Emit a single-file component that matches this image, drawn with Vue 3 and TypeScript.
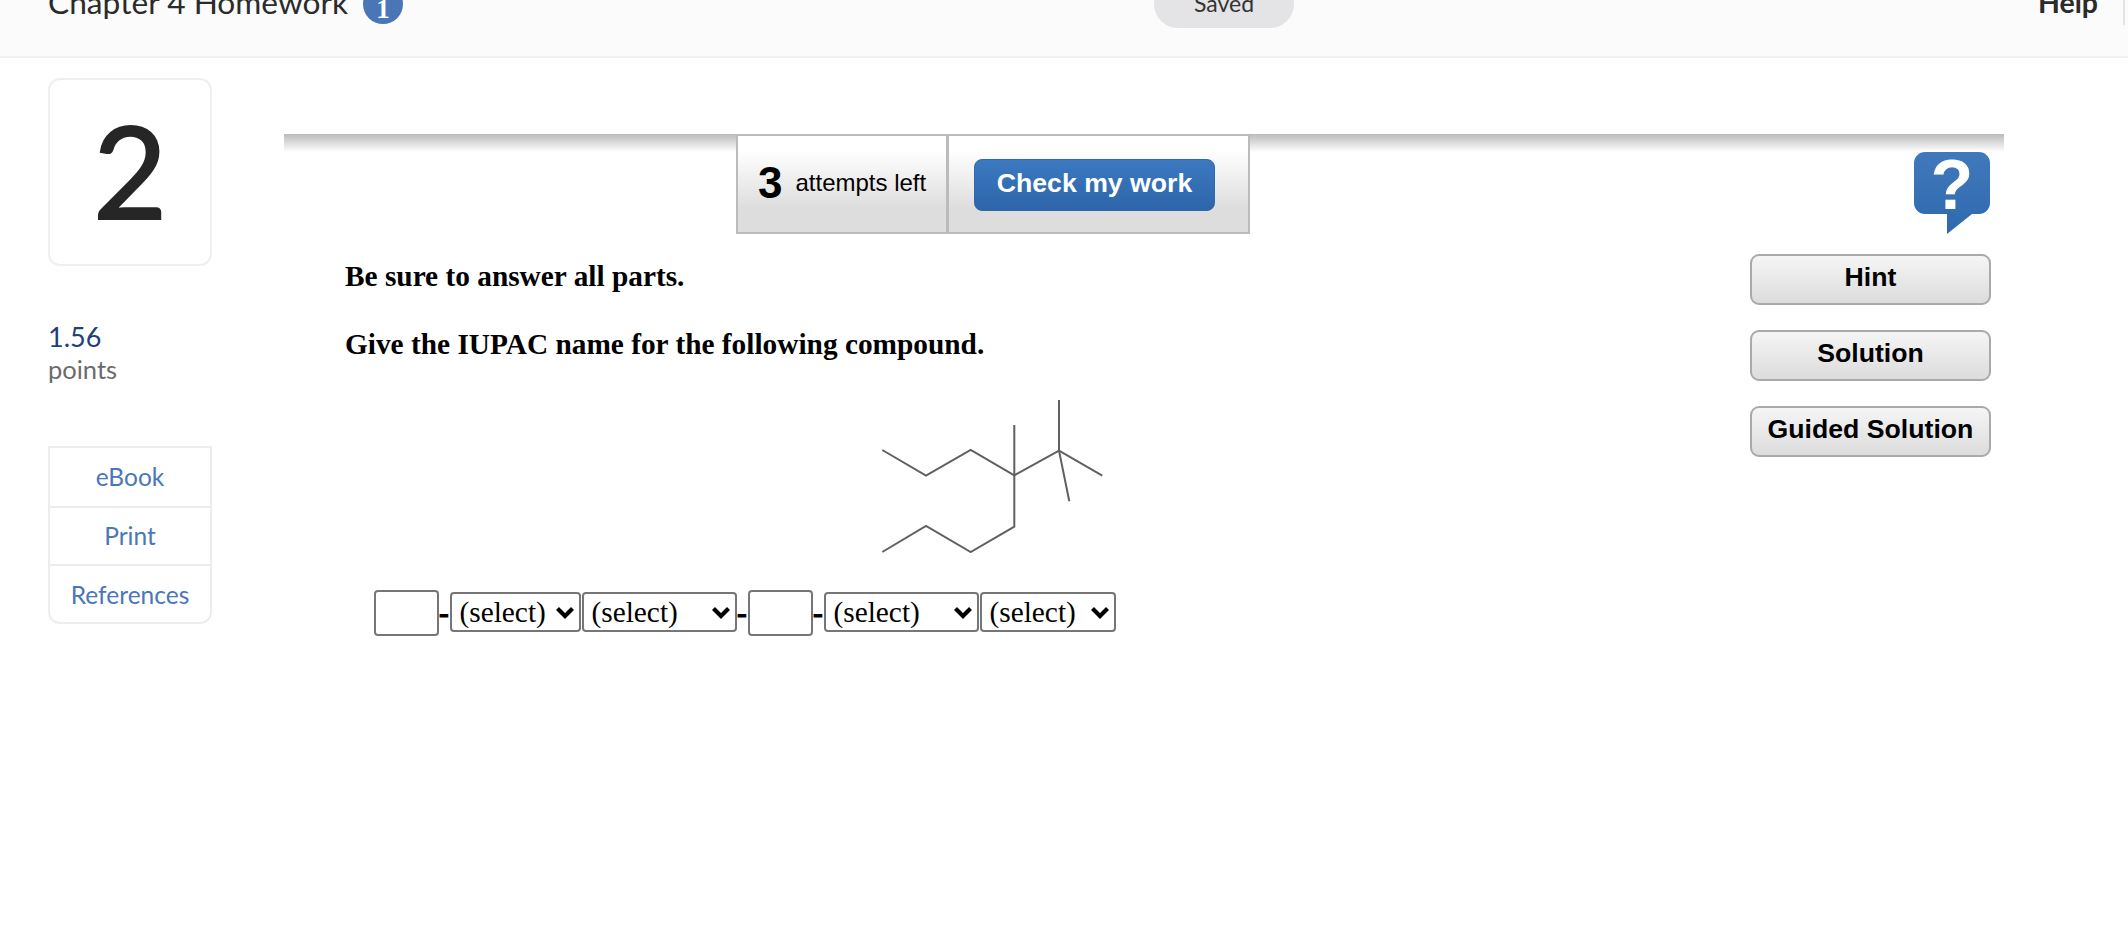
<script setup lang="ts">
type Part = { kind: 'input' | 'dash' | 'select'; width?: number }
const parts: Part[] = [
  { kind: 'input' },
  { kind: 'dash' },
  { kind: 'select', width: 131 },
  { kind: 'select', width: 155 },
  { kind: 'dash' },
  { kind: 'input' },
  { kind: 'dash' },
  { kind: 'select', width: 155 },
  { kind: 'select', width: 136 },
]
const links = ['eBook', 'Print', 'References']
const sideButtons = ['Hint', 'Solution', 'Guided Solution']
</script>

<template>
  <div class="page">
    <header class="topbar">
      <span class="title">Chapter 4 Homework</span>
      <span class="badge">1</span>
      <span class="saved">Saved</span>
      <span class="help">Help</span>
      <span class="help-divider"></span>
    </header>

    <div class="body">
      <aside class="left">
        <div class="number-card">2</div>
        <div class="score">1.56</div>
        <div class="points">points</div>
        <nav class="links">
          <a v-for="link in links" :key="link" class="link">{{ link }}</a>
        </nav>
      </aside>

      <main class="main">
        <div class="toolbar">
          <div class="attempts">
            <div class="attempts-count">
              <span class="count">3</span>
              <span class="count-label">attempts left</span>
            </div>
            <div class="attempts-action">
              <button class="check" type="button">Check my work</button>
            </div>
          </div>
          <svg class="help-icon" width="76" height="82" viewBox="0 0 76 82">
            <defs>
              <linearGradient id="helpFill" x1="0" y1="0" x2="0" y2="1">
                <stop offset="0" stop-color="#4079bb" />
                <stop offset="1" stop-color="#2f69ae" />
              </linearGradient>
            </defs>
            <path
              d="M11 0H65A11 11 0 0 1 76 11V51A11 11 0 0 1 65 62H58L33 82V62H11A11 11 0 0 1 0 51V11A11 11 0 0 1 11 0Z"
              fill="url(#helpFill)"
              stroke="#fff"
              stroke-width="4"
              paint-order="stroke"
            />
            <text x="38" y="57" text-anchor="middle" class="help-mark">?</text>
          </svg>
        </div>

        <div class="content">
          <section class="question">
            <p class="line">Be sure to answer all parts.</p>
            <p class="line">Give the IUPAC name for the following compound.</p>
            <svg class="molecule" width="224" height="154" viewBox="880 399 224 154">
              <g fill="none" stroke="#606060" stroke-width="2">
                <polyline points="882.3,450 926,475.7 970.7,450 1014.3,475.3 1059,450.7 1102.3,475.7" />
                <polyline points="1059,400 1059,450.7 1069.3,501.3" />
                <polyline points="1014.3,425 1014.3,526.7 970.7,552 926,526 882.3,552" />
              </g>
            </svg>
            <div class="answer">
              <template v-for="(part, i) in parts" :key="i">
                <input v-if="part.kind === 'input'" class="box" type="text" />
                <span v-else-if="part.kind === 'dash'" class="dash">-</span>
                <span v-else class="select-wrap" :style="{ width: part.width + 'px' }">
                  <select class="select">
                    <option>(select)</option>
                  </select>
                  <svg class="chevron" width="20" height="13" viewBox="0 0 20 13">
                    <path d="M2.5 2.5L10 10L17.5 2.5" fill="none" stroke="#000" stroke-width="4.2" />
                  </svg>
                </span>
              </template>
            </div>
          </section>
          <div class="side">
            <button v-for="label in sideButtons" :key="label" class="side-btn" type="button">{{ label }}</button>
          </div>
        </div>
      </main>
    </div>
  </div>
</template>

<style>
html,
body {
  background: #fff;
  overflow: hidden;
}
</style>

<style scoped>
.page {
  width: 2128px;
  height: 950px;
  overflow: hidden;
  background: #fff;
  font-family: "Lato", "Liberation Sans", sans-serif;
}
.topbar {
  height: 56px;
  background: #fbfbfb;
  border-bottom: 2px solid #f1f1f1;
  display: flex;
  align-items: flex-start;
  padding-left: 48px;
  overflow: hidden;
}
.title {
  font-size: 31.7px;
  line-height: 34px;
  margin-top: -15px;
  color: #2b2b2b;
  width: 299px;
  white-space: nowrap;
}
.badge {
  width: 40px;
  height: 40px;
  margin-left: 16px;
  margin-top: -16px;
  border-radius: 50%;
  background: #4a76b8;
  color: #fff;
  font: bold 27px/50px "Liberation Serif", serif;
  text-align: center;
  flex: none;
}
.saved {
  width: 140px;
  height: 48px;
  margin-left: 751px;
  margin-top: -20px;
  border-radius: 24px;
  background: #e4e3e6;
  color: #333;
  font-size: 23px;
  line-height: 47px;
  text-align: center;
  flex: none;
}
.help {
  margin-left: auto;
  margin-top: -15px;
  font-size: 28.5px;
  line-height: 34px;
  font-weight: 700;
  color: #2b2b2b;
}
.help-divider {
  width: 2px;
  height: 25px;
  margin-left: 25px;
  margin-right: 3px;
  background: #e4e4e4;
  flex: none;
}
.body {
  display: flex;
  align-items: flex-start;
}
.left {
  width: 164px;
  margin-left: 48px;
  margin-top: 20px;
  flex: none;
}
.number-card {
  box-sizing: border-box;
  height: 188px;
  border: 2px solid #efefef;
  border-radius: 12px;
  font-size: 128px;
  line-height: 180px;
  text-align: center;
  color: #262626;
  -webkit-text-stroke: 2px #262626;
}
.score {
  margin-top: 55px;
  font-size: 27px;
  line-height: 32px;
  color: #1d3f7c;
}
.points {
  margin-top: 0;
  font-size: 25.5px;
  line-height: 32px;
  color: #6b6b6b;
}
.links {
  margin-top: 61px;
  box-sizing: border-box;
  height: 178px;
  border: 2px solid #ededed;
  border-radius: 0 0 12px 12px;
  display: flex;
  flex-direction: column;
}
.link {
  display: flex;
  align-items: center;
  justify-content: center;
  height: 59px;
  font-size: 24.5px;
  color: #4a76ba;
}
.link + .link {
  border-top: 2px solid #ededed;
  height: 57px;
}
.main {
  width: 1720px;
  margin-left: 72px;
  margin-top: 76px;
  flex: none;
}
.toolbar {
  display: flex;
  align-items: flex-start;
  height: 100px;
  padding-left: 452px;
  padding-right: 14px;
  background: linear-gradient(#bbbbbb, #ffffff) no-repeat top / 100% 18px;
}
.attempts {
  box-sizing: border-box;
  display: flex;
  width: 514px;
  height: 100px;
  border: 2px solid #bbb;
  background: linear-gradient(#ffffff 15%, #dddddd 76%);
  font-family: "Liberation Sans", Arial, sans-serif;
}
.attempts-count {
  box-sizing: border-box;
  width: 211px;
  padding-left: 20px;
  display: flex;
  align-items: center;
  border-right: 3px solid #bbb;
  padding-bottom: 2px;
}
.count {
  font-size: 44px;
  font-weight: 700;
  color: #000;
}
.count-label {
  margin-left: 13px;
  font-size: 24px;
  color: #000;
}
.attempts-action {
  flex: 1;
  padding-left: 25px;
  padding-top: 23px;
}
.check {
  display: block;
  width: 241px;
  height: 52px;
  padding: 0 0 4px;
  border: 1px solid #2f69ae;
  border-radius: 8px;
  background: linear-gradient(#3b79c2, #2d65a8);
  color: #fff;
  font: bold 26.67px "Liberation Sans", Arial, sans-serif;
}
.help-icon {
  margin-left: auto;
  margin-top: 18px;
  flex: none;
  overflow: visible;
}
.help-mark {
  font: bold 70px "Liberation Sans", Arial, sans-serif;
  fill: #fff;
}
.content {
  display: flex;
  align-items: flex-start;
  margin-top: 20px;
  padding-right: 13px;
}
.question {
  flex: 1;
  padding-left: 61px;
  padding-top: 6px;
}
.line {
  margin: 0 0 35px;
  font: bold 29.33px/33px "Liberation Serif", "Times New Roman", serif;
  color: #000;
}
.line + .line {
  margin-bottom: 0;
}
.molecule {
  display: block;
  margin-left: 535px;
  margin-top: 38px;
}
.answer {
  display: flex;
  align-items: center;
  margin-top: 37px;
  margin-left: 28.5px;
  height: 46px;
}
.box {
  box-sizing: border-box;
  width: 65px;
  height: 46px;
  padding: 0;
  border: 2px solid #767676;
  border-radius: 4px;
  background: #fff;
}
.dash {
  width: 11px;
  text-align: center;
  font: bold 29.33px "Liberation Serif", serif;
  -webkit-text-stroke: 1px #000;
}
.select-wrap {
  position: relative;
  display: block;
  height: 40px;
  margin-bottom: 2px;
}
.select-wrap + .select-wrap {
  margin-left: 1px;
}
.select {
  box-sizing: border-box;
  display: block;
  width: 100%;
  height: 100%;
  margin: 0;
  padding: 0 0 0 8px;
  appearance: none;
  border: 2px solid #767676;
  border-radius: 4px;
  background: #fff;
  color: #000;
  font: 29.33px "Liberation Serif", "Times New Roman", serif;
}
.chevron {
  position: absolute;
  right: 6px;
  top: 14px;
  pointer-events: none;
}
.side {
  width: 241px;
  flex: none;
  display: flex;
  flex-direction: column;
  gap: 25px;
}
.side-btn {
  box-sizing: border-box;
  height: 51px;
  padding: 0 0 4px;
  border: 2px solid #aaa;
  border-radius: 9px;
  background: linear-gradient(#f5f5f5, #dcdcdc);
  color: #000;
  font: bold 26.67px "Liberation Sans", Arial, sans-serif;
}
</style>
